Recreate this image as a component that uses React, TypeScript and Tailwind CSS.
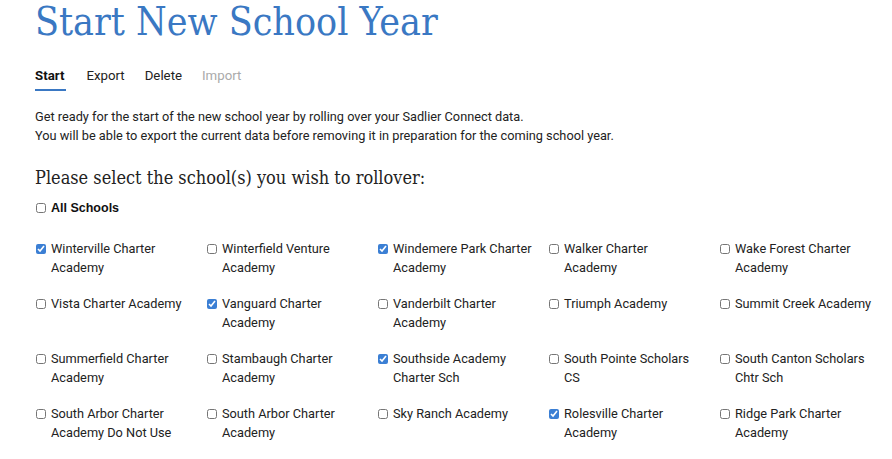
import { useState } from 'react'

type School = { name: string; checked: boolean }

const initialSchools: School[] = [
  { name: 'Winterville Charter Academy', checked: true },
  { name: 'Winterfield Venture Academy', checked: false },
  { name: 'Windemere Park Charter Academy', checked: true },
  { name: 'Walker Charter\nAcademy', checked: false },
  { name: 'Wake Forest Charter Academy', checked: false },
  { name: 'Vista Charter Academy', checked: false },
  { name: 'Vanguard Charter Academy', checked: true },
  { name: 'Vanderbilt Charter Academy', checked: false },
  { name: 'Triumph Academy', checked: false },
  { name: 'Summit Creek Academy', checked: false },
  { name: 'Summerfield Charter Academy', checked: false },
  { name: 'Stambaugh Charter Academy', checked: false },
  { name: 'Southside Academy Charter Sch', checked: true },
  { name: 'South Pointe Scholars CS', checked: false },
  { name: 'South Canton Scholars Chtr Sch', checked: false },
  { name: 'South Arbor Charter Academy Do Not Use', checked: false },
  { name: 'South Arbor Charter Academy', checked: false },
  { name: 'Sky Ranch Academy', checked: false },
  { name: 'Rolesville Charter Academy', checked: true },
  { name: 'Ridge Park Charter Academy', checked: false },
]

const tabs = ['Start', 'Export', 'Delete', 'Import']

export default function App() {
  const [schools, setSchools] = useState(initialSchools)
  const [allSchools, setAllSchools] = useState(false)

  const toggle = (index: number) =>
    setSchools((prev) =>
      prev.map((s, i) => (i === index ? { ...s, checked: !s.checked } : s)),
    )

  return (
    <div className="min-h-[459px] bg-white pl-[35px] font-['Roboto',sans-serif] text-[12.75px] text-[#222]">
      <h1 className="font-['DejaVu_Serif',serif] font-stretch-condensed text-[39px] leading-[44px] text-[#3a78c3]">
        Start New School Year
      </h1>

      <nav className="mt-[23px] flex gap-[20px] text-[13.25px]">
        {tabs.map((tab, i) => (
          <span
            key={tab}
            className={[
              'pb-[4px] leading-[18px]',
              i === 0 ? 'border-b-2 border-[#3a78c3] pr-[2px] font-bold text-[#111]' : 'border-b-2 border-transparent',
              i === 3 ? 'text-[#aaa]' : '',
            ].join(' ')}
          >
            {tab}
          </span>
        ))}
      </nav>

      <div className="mt-[16px] leading-[19px]">
        <p>Get ready for the start of the new school year by rolling over your Sadlier Connect data.</p>
        <p>You will be able to export the current data before removing it in preparation for the coming school year.</p>
      </div>

      <h2 className="mt-[20px] font-['DejaVu_Serif',serif] font-stretch-condensed text-[18px] leading-[26px] text-[#222]">
        Please select the school(s) you wish to rollover:
      </h2>

      <label className="mt-[8px] flex items-center gap-[5px] leading-[18px]">
        <input
          type="checkbox"
          checked={allSchools}
          onChange={() => setAllSchools(!allSchools)}
          className="m-0 ml-[1px] h-[10px] w-[10px] accent-[#3b7fd4]"
        />
        <span className="font-['Liberation_Sans',sans-serif] text-[12.5px] font-bold text-[#111]">All Schools</span>
      </label>

      <div className="mt-[23px] grid grid-cols-[repeat(5,171px)] gap-y-[18px]">
        {schools.map((school, i) => (
          <label key={school.name} className="flex items-start gap-[5px] leading-[18.5px]">
            <input
              type="checkbox"
              checked={school.checked}
              onChange={() => toggle(i)}
              className="m-0 ml-[1px] mt-[4px] h-[10px] w-[10px] shrink-0 accent-[#3b7fd4]"
            />
            <span className="w-[142px] whitespace-pre-line">{school.name}</span>
          </label>
        ))}
      </div>
    </div>
  )
}
